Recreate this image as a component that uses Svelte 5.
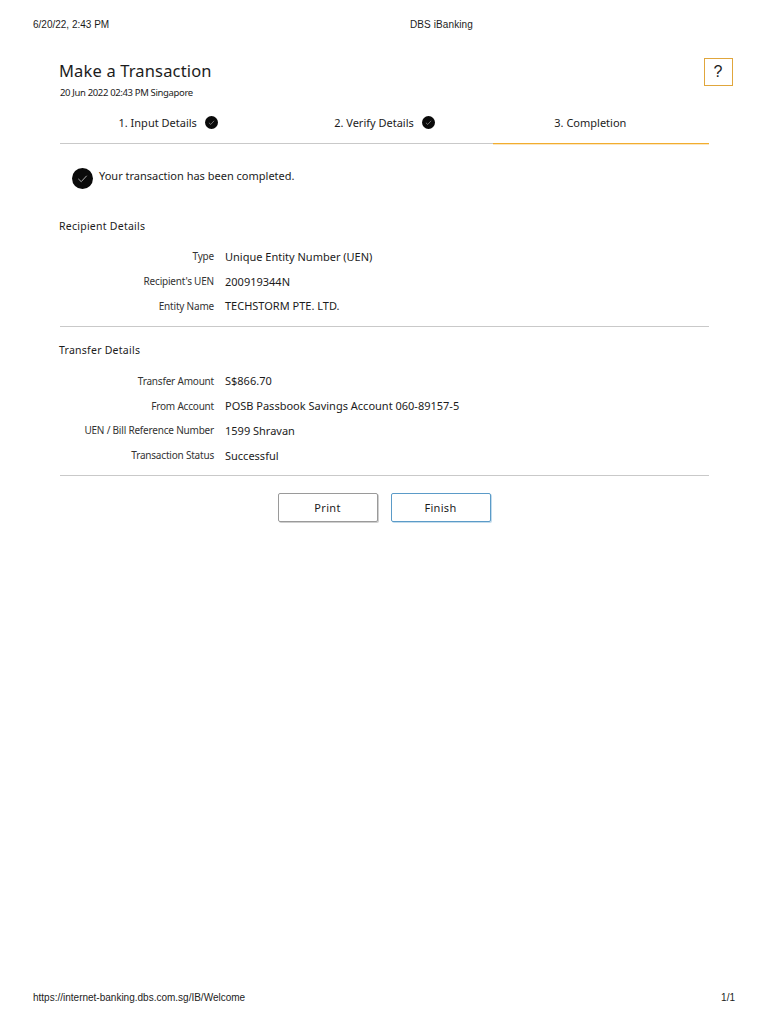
<script>
  const recipient = [
    { label: 'Type', value: 'Unique Entity Number (UEN)' },
    { label: "Recipient's UEN", value: '200919344N' },
    { label: 'Entity Name', value: 'TECHSTORM PTE. LTD.' }
  ]
  const transfer = [
    { label: 'Transfer Amount', value: 'S$866.70' },
    { label: 'From Account', value: 'POSB Passbook Savings Account 060-89157-5' },
    { label: 'UEN / Bill Reference Number', value: '1599 Shravan' },
    { label: 'Transaction Status', value: 'Successful' }
  ]
</script>

{#snippet check(cls)}
  <svg class={cls} viewBox="0 0 20 20">
    <circle cx="10" cy="10" r="10" fill="#0a0a0a" />
    <path d="M6 10.4 L8.8 13 L14 7.4" fill="none" stroke="#e8e8e8" stroke-width="0.7" />
  </svg>
{/snippet}

{#snippet rows(list)}
  <div class="rows">
    {#each list as row}
      <div class="label">{row.label}</div>
      <div class="value">{row.value}</div>
    {/each}
  </div>
{/snippet}

<div class="page">
  <header class="print-head">
    <span>6/20/22, 2:43 PM</span>
    <span class="print-title">DBS iBanking</span>
  </header>

  <main>
    <div class="title-row">
      <div>
        <h1>Make a Transaction</h1>
        <p class="stamp">20 Jun 2022 02:43 PM Singapore</p>
      </div>
      <div class="help">?</div>
    </div>

    <div class="steps">
      <div class="step">1. Input Details {@render check('tick')}</div>
      <div class="step">2. Verify Details {@render check('tick')}</div>
      <div class="step active">3. Completion</div>
    </div>

    <div class="done">
      {@render check('tick-big')}
      <span>Your transaction has been completed.</span>
    </div>

    <section class="first">
      <h2>Recipient Details</h2>
      {@render rows(recipient)}
    </section>

    <section>
      <h2>Transfer Details</h2>
      {@render rows(transfer)}
    </section>

    <div class="buttons">
      <button class="btn">Print</button>
      <button class="btn primary">Finish</button>
    </div>
  </main>

  <footer class="print-foot">
    <span>https://internet-banking.dbs.com.sg/IB/Welcome</span>
    <span>1/1</span>
  </footer>
</div>

<style>
  :global(body) {
    background: #fff;
  }
  .page {
    height: 1024px;
    box-sizing: border-box;
    display: flex;
    flex-direction: column;
    font-family: 'Noto Sans', sans-serif;
    color: #1c1c1c;
  }
  .print-head {
    position: relative;
    display: flex;
    padding: 19px 33px 0;
    height: 12px;
    font: 10px/12px 'Liberation Sans', sans-serif;
  }
  .print-title {
    position: absolute;
    left: 410px;
    letter-spacing: 0.1px;
  }
  main {
    flex: 1;
    padding: 28px 59px 0;
  }
  .title-row {
    display: flex;
    justify-content: space-between;
    align-items: flex-start;
    height: 47px;
  }
  h1 {
    margin: 0;
    font-size: 16.5px;
    line-height: 24px;
    font-weight: 400;
    letter-spacing: 0.15px;
  }
  .stamp {
    margin: 3px 0 0 1px;
    font-size: 9.5px;
    line-height: 14px;
    letter-spacing: -0.35px;
  }
  .help {
    width: 26px;
    height: 26px;
    margin: -1px -24px 0 0;
    padding-right: 1px;
    border: 1px solid #e0a63c;
    display: flex;
    align-items: center;
    justify-content: center;
    font: 16px 'Liberation Sans', sans-serif;
  }
  .steps {
    display: grid;
    grid-template-columns: repeat(3, 1fr);
    width: 649px;
    margin-left: 1px;
  }
  .step {
    display: flex;
    align-items: center;
    justify-content: center;
    gap: 8px;
    height: 38px;
    box-sizing: border-box;
    padding-bottom: 5px;
    border-bottom: 1px solid #c9c9c9;
    font-size: 11px;
  }
  .step.active {
    border-bottom: 1px solid #f2ad2e;
    box-shadow: 0 1px 0 rgba(242, 173, 46, 0.3);
    padding-right: 21px;
  }
  .tick {
    width: 13px;
    height: 13px;
  }
  .tick-big {
    width: 21px;
    height: 21px;
    margin-top: 2px;
  }
  .done {
    display: flex;
    align-items: flex-start;
    gap: 6px;
    margin: 22px 0 0 13px;
    height: 44px;
    font-size: 11px;
    line-height: 20px;
  }
  section {
    margin: 13px 0 0 1px;
    padding-bottom: 7px;
    width: 649px;
    border-bottom: 1px solid #c9c9c9;
  }
  section.first {
    margin-top: 6px;
    padding-bottom: 8px;
  }
  h2 {
    margin: 0 0 8px -1px;
    font-size: 10.5px;
    line-height: 20px;
    font-weight: 400;
    letter-spacing: 0.25px;
  }
  .rows {
    display: grid;
    grid-template-columns: 154px 1fr;
    column-gap: 11px;
    grid-auto-rows: 24.8px;
    align-items: center;
  }
  .label {
    text-align: right;
    font-size: 10px;
    letter-spacing: -0.2px;
    color: #333;
  }
  .value {
    font-size: 11px;
  }
  .buttons {
    display: flex;
    justify-content: center;
    gap: 13px;
    margin: 17px 0 0;
    width: 650px;
  }
  .btn {
    width: 100px;
    height: 29px;
    background: #fff;
    border: 1px solid #9a9a9a;
    border-radius: 2px;
    box-shadow: 1px 1px 0 #cfcfcf;
    font-family: inherit;
    font-size: 11px;
    letter-spacing: 0.3px;
    color: #1c1c1c;
    padding: 0;
  }
  .btn.primary {
    border-color: #5b9bc8;
    box-shadow: 1px 1px 0 #c4dcec;
  }
  .print-foot {
    display: flex;
    justify-content: space-between;
    padding: 0 33px 20px;
    font: 10px/12px 'Liberation Sans', sans-serif;
  }
</style>
